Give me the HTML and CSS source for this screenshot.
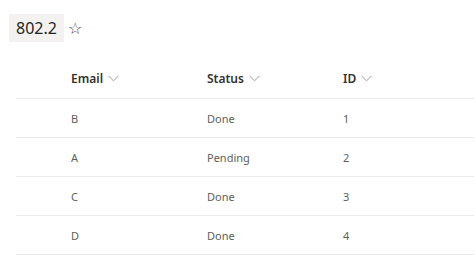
FILE: index.html
```html
<!DOCTYPE html>
<html lang="en">
<head>
    <meta charset="UTF-8">
    <title>802.2</title>
    <link rel="stylesheet" href="styles.css">
</head>
<body>
    <div class="title">
        <span class="title-box">802.2</span>
        <span class="star">&#9734;</span>
    </div>
    <div class="list">
        <div class="row head">
            <div class="cell">Email <span class="chev"><svg width="11" height="7" viewBox="0 0 11 7"><path d="M0.5 0.8 L5.5 5.8 L10.5 0.8" fill="none" stroke="#a19f9d" stroke-width="1"/></svg></span></div>
            <div class="cell">Status <span class="chev"><svg width="11" height="7" viewBox="0 0 11 7"><path d="M0.5 0.8 L5.5 5.8 L10.5 0.8" fill="none" stroke="#a19f9d" stroke-width="1"/></svg></span></div>
            <div class="cell">ID <span class="chev"><svg width="11" height="7" viewBox="0 0 11 7"><path d="M0.5 0.8 L5.5 5.8 L10.5 0.8" fill="none" stroke="#a19f9d" stroke-width="1"/></svg></span></div>
        </div>
        <div class="row">
            <div class="cell">B</div>
            <div class="cell">Done</div>
            <div class="cell">1</div>
        </div>
        <div class="row">
            <div class="cell">A</div>
            <div class="cell">Pending</div>
            <div class="cell">2</div>
        </div>
        <div class="row">
            <div class="cell">C</div>
            <div class="cell">Done</div>
            <div class="cell">3</div>
        </div>
        <div class="row">
            <div class="cell">D</div>
            <div class="cell">Done</div>
            <div class="cell">4</div>
        </div>
    </div>
</body>
</html>
```

FILE: styles.css
```css
body {
    margin: 0;
    font-family: "Segoe UI", "Noto Sans", sans-serif;
    background: #fff;
    color: #323130;
}

/* 标题 */
.title {
    display: flex;
    align-items: center;
    padding: 14px 0 0 9px;
    height: 28px;
}
.title-box {
    background: #f3f2f1;
    height: 28px;
    line-height: 28px;
    padding: 0 7px;
    font-size: 16px;
    color: #252423;
}
.star {
    margin-left: 4px;
    font-size: 16px;
    color: #484644;
}

/* 列表 */
.list {
    margin: 17px 0 0 16px;
}
.row {
    display: flex;
    height: 38px;
    align-items: center;
    border-bottom: 1px solid #edebe9;
    font-size: 11px;
    color: #605e5c;
}
.row.head {
    height: 39px;
    font-size: 12px;
    font-weight: 600;
    color: #323130;
}
.cell {
    width: 136px;
    flex-shrink: 0;
    display: flex;
    align-items: center;
}
.cell:first-child {
    padding-left: 55px;
}
.chev {
    margin-left: 5px;
    display: flex;
}
```
